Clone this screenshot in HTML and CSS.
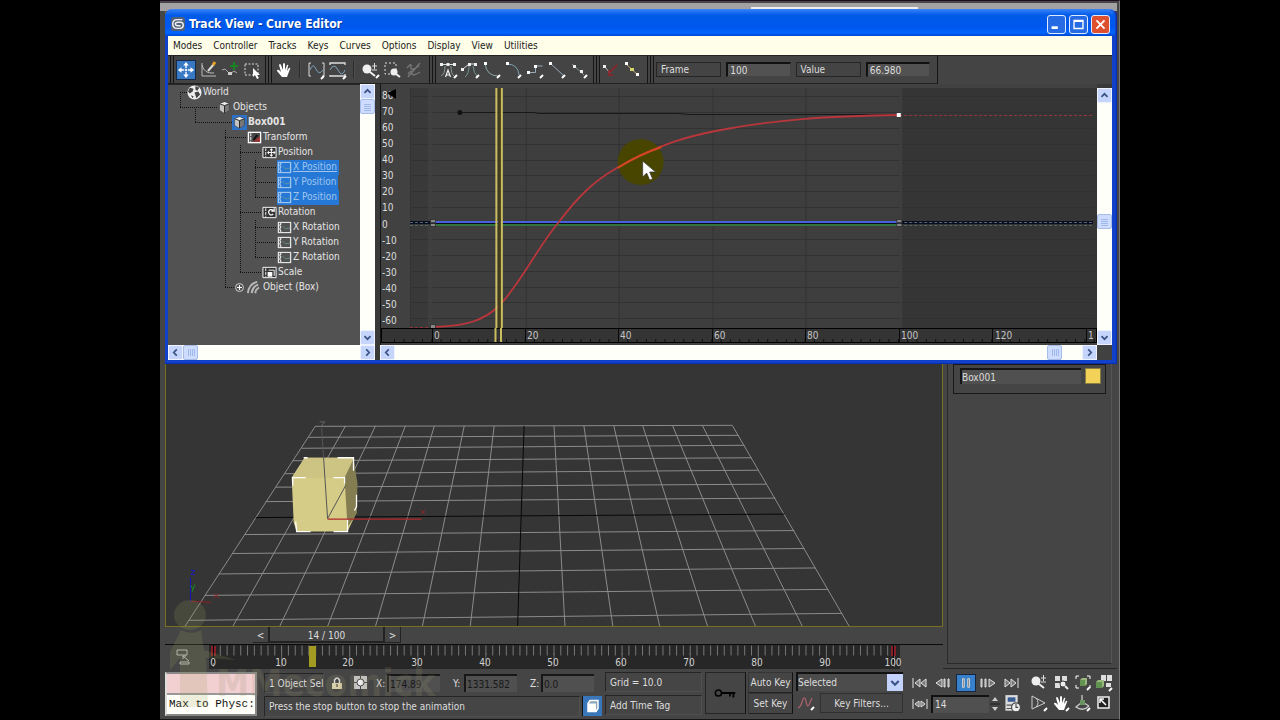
FILE: index.html
```html
<!DOCTYPE html>
<html lang="en">
<head>
<meta charset="utf-8">
<title>Track View - Curve Editor</title>
<link rel="stylesheet" href="styles.css">
</head>
<body>
<svg class="defs" aria-hidden="true">
  <defs>
    <symbol id="curve" viewBox="0 0 16 13"><rect x="1.5" y="1" width="13" height="11" fill="none" stroke="currentColor" stroke-width="1.4"/><path d="M4 1v2l-1 1 1 2-1 2 1 2v2" fill="none" stroke="currentColor" stroke-width="1.300"/><path d="M6 5l3 3 5-1" fill="none" stroke="#6d9a8e" stroke-width=".8"/></symbol>
    <symbol id="cube" viewBox="0 0 16 16"><path d="M8 2l5 2v7l-5 3-5-3V4z" fill="#aaa" stroke="#333"/><path d="M3 4l5 2v8l-5-3z" fill="#c4c4c4"/><path d="M8 6l5-2v7l-5 3z" fill="#777"/><path d="M8 2l5 2-5 2-5-2z" fill="#eee"/><path d="M3 4l5 2 5-2M8 6v8" fill="none" stroke="#222"/></symbol>
    <symbol id="up" viewBox="0 0 15 15"><path d="M4 9l3.500-3.500L11 9" fill="none" stroke="#3c5386" stroke-width="2"/></symbol>
    <symbol id="down" viewBox="0 0 15 15"><path d="M4 6l3.500 3.500L11 6" fill="none" stroke="#3c5386" stroke-width="2"/></symbol>
    <symbol id="left" viewBox="0 0 15 15"><path d="M9 4L5.500 7.500 9 11" fill="none" stroke="#3c5386" stroke-width="2"/></symbol>
    <symbol id="right" viewBox="0 0 15 15"><path d="M6 4l3.500 3.500L6 11" fill="none" stroke="#3c5386" stroke-width="2"/></symbol>
    <symbol id="hand" viewBox="0 0 20 20"><path d="M8 17L3 11q0-2 2-1l2 2L5 5q1-2 2 0l2 5V4q1-2 2 0v6l2-5q2-1 1 1l-1 5 2-3q2-1 1 1l-3 8z" fill="#fff"/></symbol>
    <symbol id="lens" viewBox="0 0 20 20"><circle cx="7" cy="9" r="4.500" fill="#eee"/><path d="M10 12l5 4" stroke="#eee" stroke-width="2"/><path d="M12 6h5M14.500 3v6M12 10h5" stroke="#ddd"/></symbol>
  </defs>
</svg>
<main class="app">
  <div class="topstrip"></div>
  <div class="workspace">
    <section class="left">
      <div class="viewport">
        <svg class="scene" viewBox="165 365 778 262" preserveAspectRatio="xMidYMax meet" aria-label="Perspective viewport">
          <g fill="none" stroke="#8c8c8c">
            <path d="M315 426.500L733 425.500M308 437.500L739 435.500M301 448.500L745 445.500M292 461L752 458M284 474L759 470.500M275 487.500L767 484.500M265 502L776 498.500M244 535L795 531M232 554L805 549M218 574.500L816 568.500M204 596L829 590M188 621L843 614"/>
            <path d="M315 426L184 627M345 426L232 627M375 426L279 627M405 426L327 627M434 426L375 627M464 426L422 627M494 426L470 627M554 426L565 627M584 426L613 627M614 426L660 627M643 426L708 627M673 426L756 627M703 426L803 627M733 426L850 627"/>
            <path d="M524 426L517.500 627M255 518L785 514.500" stroke="#080808"/>
          </g>
          <path d="M291 478l13-20h49l1 10 2 45-9 19h-51l-3-9z" fill="#d5cc88"/>
          <path d="M291 478l13-20h49l-9 20z" fill="#cdc382"/>
          <path d="M344 478l9-19 4 25-1 30-9 14z" fill="#847d51"/>
          <path d="M307 458h-4m34 0h16v13M292 486v-8h13m28 0h11v6m12 11v12l-2 4M295 522l1 10h14m23 0h14v-12" fill="none" stroke="#fff" stroke-width="1.300"/>
          <path d="M321 428L327 519l18-33" fill="none" stroke="#555"/>
          <path d="M327 519.500h94" stroke="#b0292b" stroke-width="1.300"/>
          <path d="M420 510l5 5m0-5l-5 5" stroke="#8c2528"/>
          <path d="M319 422h5l-4 5" fill="none" stroke="#666"/>
          <path d="M189.500 602v-24" stroke="#1414c0"/><path d="M190 602l20 1" stroke="#901c20"/>
          <path d="M190 571h4l-4 4h4" fill="none" stroke="#1a1ac0"/><path d="M190 586l2 4 2-5m-2 5l-1 3" fill="none" stroke="#178a22"/><path d="M213 594l5 5m0-5l-5 5" stroke="#902025"/>
        </svg>
      </div>
      <div class="slider"><button aria-label="Previous frame">&lt;</button><output>14 / 100</output><button aria-label="Next frame">&gt;</button></div>
      <div class="track">
        <svg viewBox="165 645 778 25" preserveAspectRatio="none" role="img" aria-label="Track bar">
          <path d="M209 645H900V670H209z" fill="#272727"/><path d="M165 645.500H943" stroke="#0b0b0b"/>
          <path d="M213 651.500H896" stroke="#777" stroke-width="10" stroke-dasharray="1 5.810"/>
          <path d="M213 661H896" stroke="#666" stroke-width="14" stroke-dasharray="1 67.100"/>
          <path d="M211 647h5v10h-5zM891 647h5v10h-5z" fill="#88202a"/><path d="M213.500 646v18M893.500 646v18" stroke="#080808"/>
          <path d="M309 647h7v21h-7z" fill="#a39a21"/>
          <g fill="none" stroke="#bbb"><path d="M177 651h10v5h-10zM180 663h9v2h-9zM189 662l-6-5m0 3v-3h3"/></g>
          <g class="tracktext"><text x="213" y="667">0</text><text x="281" y="667">10</text><text x="348" y="667">20</text><text x="417" y="667">30</text><text x="485" y="667">40</text><text x="553" y="667">50</text><text x="621" y="667">60</text><text x="689" y="667">70</text><text x="757" y="667">80</text><text x="825" y="667">90</text><text x="893" y="667">100</text></g>
        </svg>
      </div>
    </section>
    <aside class="panel"><div class="panelbody"><div class="namebox"><input aria-label="Object name" value="Box001"><button class="swatch" aria-label="Object color"></button></div></div></aside>
  </div>

  <footer class="status">
    <div class="listener"><div class="macro"></div><div class="output">Max to Physc:</div></div>
    <div class="info">
      <div class="row coords">
        <span class="cell selected">1 Object Sel</span>
        <button aria-label="Selection lock"><svg viewBox="0 0 14 14"><path d="M2.500 7V4q2.500-4 5 0v3" fill="none" stroke="#ddd" stroke-width="1.500"/><path d="M0 7h10v6H0z" fill="#d8cfa8"/><path d="M5 8v3" stroke="#333"/></svg></button>
        <button aria-label="Absolute mode"><svg viewBox="0 0 14 14"><path d="M0 0h13v13H0z" fill="#ccc"/><circle cx="6.500" cy="6.500" r="3.500" fill="#eee" stroke="#444"/><path d="M6.500 0v3m0 7v3M0 6.500h3m7 0h3" stroke="#444"/></svg></button>
        <label>X:<input value="174.89"></label><label>Y:<input value="1331.582"></label><label>Z:<input value="0.0"></label>
      </div>
      <div class="row"><span class="cell prompt">Press the stop button to stop the animation</span><button class="iso" aria-label="Adaptive degradation"><svg viewBox="0 0 19 19"><path d="M5 7l2-3h8v8l-2 3H5z" fill="#8aa5b8" stroke="#fff" stroke-width="1.500"/><path d="M5 7h8v8H5z" fill="#fff"/></svg></button></div>
    </div>
    <div class="gridinfo"><span class="cell">Grid = 10.0</span><span class="cell">Add Time Tag</span></div>
    <button class="key" aria-label="Set keys"><svg viewBox="0 0 26 14"><circle cx="5" cy="7" r="3.500" fill="none" stroke="#000" stroke-width="1.700"/><path d="M8.500 7H24M18 7v4m4-4v5" fill="none" stroke="#000" stroke-width="2"/></svg></button>
    <div class="keying"><button>Auto Key</button><button>Set Key</button></div>
    <div class="filters">
      <div class="selectwrap"><select aria-label="Key mode"><option>Selected</option></select><svg viewBox="0 0 15 15"><use href="#down"/></svg></div>
      <div class="row"><button class="tangent" aria-label="Default tangent"><svg viewBox="0 0 20 18"><path d="M2 14q3-1 5-9 2-3 3 2 1 7 3 4l3-7" fill="none" stroke="#a8606a" stroke-width="1.300"/><path d="M15 16l3-3" stroke="#fff" stroke-width="2"/></svg></button><button class="filterbtn">Key Filters...</button></div>
    </div>
    <div class="transport">
      <div class="row">
        <button aria-label="Go to start"><svg viewBox="0 0 18 14"><path d="M2 2v10M9 3L4 7l5 4zM15 3l-5 4 5 4z" class="ic"/></svg></button>
        <button aria-label="Previous"><svg viewBox="0 0 18 14"><path d="M8 3L2 7l6 4zM10 3h1v8h-1zM14 3h1v8h-1z" class="ic"/></svg></button>
        <button class="on" aria-label="Pause"><svg viewBox="0 0 18 14"><path d="M5 2h2v10H5zM11 2h2v10h-2z" class="ic"/></svg></button>
        <button aria-label="Next"><svg viewBox="0 0 18 14"><path d="M10 3l6 4-6 4zM6 3h1v8H6zM2 3h1v8H2z" class="ic"/></svg></button>
        <button aria-label="Go to end"><svg viewBox="0 0 18 14"><path d="M16 2v10M9 3l5 4-5 4zM3 3l5 4-5 4z" class="ic"/></svg></button>
      </div>
      <div class="row">
        <button aria-label="Key mode toggle"><svg viewBox="0 0 18 14"><path d="M2 2v10M16 2v10M8 4L4 7l4 3zM10 4l4 3-4 3z" class="ic"/></svg></button>
        <input aria-label="Current frame" value="14">
        <svg class="spin" viewBox="0 0 10 18"><path d="M5 2l3 4H2zM5 16l3-4H2z" fill="#ccc"/><path d="M0 9h10" stroke="#222"/></svg>
        <button class="config" aria-label="Time configuration"><svg viewBox="0 0 18 16"><path d="M4 0h11v14H4z" fill="#ddd"/><path d="M6 2h7v4H6z" fill="#385c92"/><path d="M5 9h6m-6 3h5" stroke="#555"/><circle cx="13.500" cy="11" r="4" fill="#eee" stroke="#444"/><path d="M13.500 8v3h2" fill="none" stroke="#444"/></svg></button>
      </div>
    </div>
    <div class="nav">
      <button aria-label="Zoom"><svg viewBox="0 0 20 20"><use href="#lens"/></svg></button>
      <button aria-label="Zoom all"><svg viewBox="0 0 20 20"><path d="M4 4h5v5H4zM11 4h5v5h-5zM4 11h5v5H4z" fill="#ddd"/><circle cx="12" cy="12" r="3" fill="#eee" stroke="#444"/><path d="M14 14l3 3" stroke="#eee" stroke-width="2"/></svg></button>
      <button aria-label="Zoom extents"><svg viewBox="0 0 20 20"><path d="M3 7V4h3m8 0h3v3m0 6v3m-11 0H3v-3" fill="none" stroke="#fff"/><path d="M7 8l2-2h5v6l-2 2H7z" fill="#9ab77f"/><path d="M7 8h5v6H7z" fill="#629350"/><path d="M14 18l3-3" stroke="#fff" stroke-width="2"/></svg></button>
      <button aria-label="Zoom extents all"><svg viewBox="0 0 20 20"><path d="M7 3h5v6H7zM13 3h5v6h-5zM12 11h5v4h-5z" fill="#ddd"/><path d="M2 10l2-2h6v6l-2 2H2z" fill="#9ab77f"/><path d="M2 10h6v6H2z" fill="#629350"/><path d="M15 19l3-3" stroke="#fff" stroke-width="2"/></svg></button>
      <button aria-label="Field of view"><svg viewBox="0 0 20 20"><path d="M3 16V3l13 7L3 16M7 5q4 5 0 9" fill="none" stroke="#ccc"/><path d="M15 18l3-3" stroke="#fff" stroke-width="2"/></svg></button>
      <button aria-label="Pan"><svg viewBox="0 0 20 20"><use href="#hand"/><path d="M15 18l3-3" stroke="#fff" stroke-width="2"/></svg></button>
      <button aria-label="Orbit"><svg viewBox="0 0 20 20"><path d="M9 2v5m7 6l-5-3m5 3q-6 6-13 1l5-4" fill="none" stroke="#ccc" stroke-width="1.300"/><path d="M7 7h5v5H7z" fill="#6a9460"/><path d="M14 18l3-3" stroke="#fff" stroke-width="2"/></svg></button>
      <button aria-label="Maximize viewport"><svg viewBox="0 0 20 20"><path d="M4 4h11v11H4z" fill="#222" stroke="#eee" stroke-width="1.500"/><path d="M12 12L6 6m0 4V6h4" fill="none" stroke="#fff" stroke-width="1.500"/></svg></button>
    </div>
  </footer>

  <div class="watermark" aria-hidden="true"><svg viewBox="0 0 76 115"><ellipse cx="24" cy="17" rx="16" ry="15"/><path d="M15 32q12 6 20 0l3 20q16 5 32 10L40 60l2 49H14V60L4 72V54z"/></svg><span>MMecomick</span></div>

  <section class="window" aria-label="Track View - Curve Editor">
    <header class="title">
      <svg class="logo" viewBox="0 0 16 16"><rect width="16" height="16" rx="3" fill="#50607b"/><path d="M13 3H7Q2 3 2 8t5 5h4q3-1 3-4t-3-3H8Q5 6 5 8t3 2h3" fill="none" stroke="#eee" stroke-width="1.700"/></svg>
      <h1>Track View - Curve Editor</h1>
      <div class="winbuttons"><button aria-label="Minimize"><svg viewBox="0 0 19 19"><path d="M4 13h7" stroke="#fff" stroke-width="3"/></svg></button><button aria-label="Maximize"><svg viewBox="0 0 19 19"><path d="M4.500 5h10v9h-10zM4 6h11" fill="none" stroke="#fff" stroke-width="1.500"/></svg></button><button class="close" aria-label="Close"><svg viewBox="0 0 19 19"><path d="M5 5l9 9m0-9l-9 9" stroke="#fff" stroke-width="2"/></svg></button></div>
    </header>
    <nav class="menu"><button>Modes</button><button>Controller</button><button>Tracks</button><button>Keys</button><button>Curves</button><button>Options</button><button>Display</button><button>View</button><button>Utilities</button></nav>
    <div class="toolbar">
      <div class="group">
        <button class="on" aria-label="Move keys"><svg viewBox="0 0 20 20"><path d="M10 3v14M3 10h14" stroke="#fff" stroke-width="1.500" stroke-dasharray="5 1 2 1"/><path d="M10 1l3 4H7zM10 19l3-4H7zM1 10l4-3v6zM19 10l-4-3v6z" fill="#fff"/></svg></button>
        <button aria-label="Draw curves"><svg viewBox="0 0 20 20"><path d="M4 3v13h14M4 5q2 9 12 8" fill="none" stroke="#bbb"/><path d="M10 11l6-7" stroke="#ddd" stroke-width="2"/><path d="M15 5l2-3" stroke="#e6a021" stroke-width="3"/></svg></button>
        <button aria-label="Add keys"><svg viewBox="0 0 20 20"><path d="M2 10l3-1 5 5 4-3 3 2" fill="none" stroke="#aaa"/><path d="M8 12h4v3H8z" fill="#ccc"/><path d="M14 2v8m-4-4h8" stroke="#18831f" stroke-width="2"/></svg></button>
        <button aria-label="Region select"><svg viewBox="0 0 20 20"><path d="M3 4h13v11H3z" fill="none" stroke="#ddd" stroke-dasharray="2 1.500"/><path d="M11 8v9l2-2 2 4 2-1-2-3h3z" fill="#fff"/></svg></button>
      </div>
      <div class="group">
        <button aria-label="Pan"><svg viewBox="0 0 20 20"><use href="#hand"/></svg></button><i></i>
        <button aria-label="Zoom horizontal extents"><svg viewBox="0 0 20 20"><path d="M5 3H3v13h2m11-13h2v13h-2" fill="none" stroke="#ddd"/><path d="M4 10q3-8 6-1t7 1" fill="none" stroke="#7da1b8"/><path d="M15 19l3-3" stroke="#fff" stroke-width="2"/></svg></button>
        <button aria-label="Zoom value extents"><svg viewBox="0 0 20 20"><path d="M2 5V3h15v2M2 15v1h15v-2" fill="none" stroke="#ddd" stroke-width="1.300"/><path d="M2 10q4-8 8 0t7 0" fill="none" stroke="#7da1b8"/><path d="M15 19l3-3" stroke="#fff" stroke-width="2"/></svg></button><i></i>
        <button aria-label="Zoom"><svg viewBox="0 0 20 20"><use href="#lens"/><path d="M16 18l3-3" stroke="#fff" stroke-width="2"/></svg></button>
        <button aria-label="Zoom region"><svg viewBox="0 0 20 20"><path d="M3 3h11v11H3z" fill="none" stroke="#ddd" stroke-dasharray="2 2"/><circle cx="12" cy="12" r="3.500" fill="#eee"/><path d="M14 14l4 3" stroke="#eee" stroke-width="2"/></svg></button>
        <button aria-label="Isolate curve"><svg viewBox="0 0 20 20"><path d="M3 8q5-6 4-1t8-1M4 14q4-5 4-1t8-1M4 17L16 3" fill="none" stroke="#777" stroke-width="1.300"/></svg></button>
      </div>
      <div class="group">
        <button aria-label="Auto tangents"><svg viewBox="0 0 20 20"><path d="M3 4.500h14" stroke="#ddd"/><path d="M3 16q4-2 4-10m6 0q0 8 3 10" fill="none" stroke="#8a9999"/><path d="M2 3h3v3H2zM8.500 3h3v3h-3zM15 3h3v3h-3z" fill="#eee"/><path d="M7.500 17l2.500-7 2.500 7m-4-2h3" fill="none" stroke="#eee" stroke-width="1.200"/><path d="M16 18l3-3" stroke="#fff" stroke-width="2"/></svg></button>
        <button aria-label="Custom tangents"><svg viewBox="0 0 20 20"><path d="M3 9l6-5h7" fill="none" stroke="#ddd"/><path d="M5 17q4-3 4-11m4 0q1 8 4 10" fill="none" stroke="#789494"/><path d="M1 8h3v3H1zM8 3h3v3H8zM14 3h3v3h-3z" fill="#eee"/><path d="M16 18l3-3" stroke="#fff" stroke-width="2"/></svg></button>
        <button aria-label="Fast tangents"><svg viewBox="0 0 20 20"><path d="M3 4q2 12 13 12" fill="none" stroke="#89a7a6"/><path d="M2 2h3v3H2z" fill="#fff"/><path d="M15 18l3-3" stroke="#fff" stroke-width="2"/></svg></button>
        <button aria-label="Slow tangents"><svg viewBox="0 0 20 20"><path d="M3 4q11 0 12 11" fill="none" stroke="#799faa"/><path d="M2 2h3v3H2z" fill="#fff"/><path d="M14 18l3-3" stroke="#fff" stroke-width="2"/></svg></button>
        <button aria-label="Step tangents"><svg viewBox="0 0 20 20"><path d="M3 12.500h6.500V6h7" fill="none" stroke="#9ab"/><path d="M1 11h3v3H1zM8 5h3v3H8z" fill="#fff"/><path d="M14 18l3-3" stroke="#fff" stroke-width="2"/></svg></button>
        <button aria-label="Linear tangents"><svg viewBox="0 0 20 20"><path d="M2 3l14 13" stroke="#9ab"/><path d="M1 2h3v3H1z" fill="#fff"/><path d="M14 18l3-3" stroke="#fff" stroke-width="2"/></svg></button>
        <button aria-label="Smooth tangents"><svg viewBox="0 0 20 20"><path d="M2 4l12 11" stroke="#899"/><path d="M3 5h3v3H3zM10 10h3v3h-3z" fill="#eee"/><path d="M14 18l3-3" stroke="#fff" stroke-width="2"/></svg></button>
      </div>
      <div class="group tight">
        <button aria-label="Lock tangents"><svg viewBox="0 0 20 20"><path d="M4 7l5 6" stroke="#bbb"/><path d="M2 5h3v3H2z" fill="#eee"/><path d="M9 12l7-7M8 10v5h4" fill="none" stroke="#961f25" stroke-width="1.500"/></svg></button>
        <button aria-label="Show tangents"><svg viewBox="0 0 20 20"><path d="M3 4l13 12" stroke="#ca7"/><path d="M2 2h3v3H2zM13 13h3v3h-3z" fill="#fff"/><path d="M7 8h4v3H7z" fill="#d4d66a"/></svg></button>
      </div>
      <div class="group fields"><label for="frame">Frame</label><input id="frame" value="100"><label for="value">Value</label><input id="value" value="66.980"></div>
    </div>
    <div class="editor">
      <div class="treepane">
        <div class="tree">
          <svg class="links" viewBox="168 84 192 261" aria-hidden="true"><path d="M180.500 91v16M180 91.500h7M180 106.500h37M195.500 108v14M195 121.500h37M225.500 129v158M225 136.500h22M225 286.500h12M240.500 144v128M240 151.500h22M240 211.500h22M240 271.500h22M255.500 159v38M255 166.500h22M255 181.500h22M255 196.500h22M255.500 219v38M255 226.500h22M255 241.500h22M255 256.500h22" fill="none" stroke="#111" stroke-dasharray="1 1"/></svg>
          <ul>
            <li class="d0"><svg viewBox="0 0 16 16"><circle cx="8" cy="8" r="7.500" fill="#eee"/><path d="M3 3l4 1-1 3-3 2-2-2zM9 1l4 2-2 3-2-1zM8 8l4-1 2 3-4 4-1-3zM4 11l3 1-1 2z" fill="#444"/></svg><span>World</span></li>
            <li class="d2"><svg viewBox="0 0 16 16"><use href="#cube"/></svg><span>Objects</span></li>
            <li class="d3 bold"><svg viewBox="0 0 16 16"><path d="M0 0h16v16H0z" fill="#2e72c8"/><use href="#cube"/></svg><span>Box001</span></li>
            <li class="d4"><svg viewBox="0 0 16 13"><path d="M6 2h8v9H6z" fill="#444"/><path d="M6 11l8-6v6z" fill="#9c3535"/><rect x="1.500" y="1" width="13" height="11" fill="none" stroke="#fff" stroke-width="1.400"/><path d="M4 2v9" stroke="#fff" stroke-dasharray="3 1"/><path d="M7 9l4-5" stroke="#111" stroke-width="2"/></svg><span>Transform</span></li>
            <li class="d5"><svg viewBox="0 0 16 13"><path d="M1 1h14v11H1z" fill="#333" stroke="#fff"/><path d="M4 2v9" stroke="#fff" stroke-dasharray="3 1"/><path d="M10 2.500v8M6 6.500h8" stroke="#fff"/><path d="M10 2l2 2H8zM10 11l2-2H8zM5.500 6.500l2-2v4zM14.500 6.500l-2-2v4z" fill="#fff"/></svg><span>Position</span></li>
            <li class="d6 sel"><svg viewBox="0 0 16 13"><use href="#curve"/></svg><span><u>X Position</u></span></li>
            <li class="d6 sel"><svg viewBox="0 0 16 13"><use href="#curve"/></svg><span>Y Position</span></li>
            <li class="d6 sel"><svg viewBox="0 0 16 13"><use href="#curve"/></svg><span>Z Position</span></li>
            <li class="d5"><svg viewBox="0 0 16 13"><path d="M1 1h14v11H1z" fill="#333" stroke="#fff"/><path d="M4 2v9" stroke="#fff" stroke-dasharray="3 1"/><path d="M12 4q-4-2-5 2 1 5 5 2M13 2v3h-3" fill="none" stroke="#fff" stroke-width="1.300"/></svg><span>Rotation</span></li>
            <li class="d6"><svg viewBox="0 0 16 13"><use href="#curve"/></svg><span>X Rotation</span></li>
            <li class="d6"><svg viewBox="0 0 16 13"><use href="#curve"/></svg><span>Y Rotation</span></li>
            <li class="d6"><svg viewBox="0 0 16 13"><use href="#curve"/></svg><span>Z Rotation</span></li>
            <li class="d5"><svg viewBox="0 0 16 13"><path d="M1 1h14v11H1z" fill="#333" stroke="#fff"/><path d="M4 2v9" stroke="#fff" stroke-dasharray="3 1"/><path d="M7 4h6v6" fill="none" stroke="#fff"/><path d="M6 6h5v5H6z" fill="#fff"/></svg><span>Scale</span></li>
            <li class="object"><svg class="plus" viewBox="0 0 11 11"><circle cx="5.500" cy="5.500" r="4" fill="#555" stroke="#ccc"/><path d="M3 5.500h5M5.500 3v5" stroke="#fff"/></svg><svg viewBox="0 0 16 16"><path d="M2 14Q3 4 12 2M6 14q1-7 7-9M10 14q0-4 4-6" fill="none" stroke="#bbb" stroke-width="2"/></svg><span>Object (Box)</span></li>
          </ul>
        </div>
        <div class="vscroll"><button aria-label="Scroll up"><svg viewBox="0 0 15 15"><use href="#up"/></svg></button><span class="thumb"></span><button class="end" aria-label="Scroll down"><svg viewBox="0 0 15 15"><use href="#down"/></svg></button></div>
        <div class="hscroll"><button aria-label="Scroll left"><svg viewBox="0 0 15 15"><use href="#left"/></svg></button><span class="thumb"></span><button class="end" aria-label="Scroll right"><svg viewBox="0 0 15 15"><use href="#right"/></svg></button></div>
      </div>
      <div class="graphpane">
        <div class="graph">
          <div class="axis"><span>80</span><span>70</span><span>60</span><span>50</span><span>40</span><span>30</span><span>20</span><span>10</span><span>0</span><span>-10</span><span>-20</span><span>-30</span><span>-40</span><span>-50</span><span>-60</span><svg class="marker" viewBox="0 0 9 10"><path d="M0 4l9-4v10z"/></svg></div>
          <svg class="plot" viewBox="409 88 688 240" preserveAspectRatio="none" role="img" aria-label="Position curves">
            <path d="M409 88h688v240H409z" fill="#353535"/><path d="M432 88h467v240H432z" fill="#3e3e3e"/><path d="M409 88h23v240h-23z" fill="#393939"/>
            <path d="M409 96.500H1094M409 112.500H1094M409 128.500H1094M409 144.500H1094M409 160.500H1094M409 175.500H1094M409 191.500H1094M409 207.500H1094M409 239.500H1094M409 255.500H1094M409 271.500H1094M409 287.500H1094M409 302.500H1094M409 318.500H1094" stroke="#303030" opacity=".8"/>
            <path d="M409.500 88v240M525.500 88v240M618.500 88v240M712.500 88v240M805.500 88v240" stroke="#333"/>
            <path d="M427 88h5v240h-5zM899 88h3v240h-3z" fill="#454545" opacity=".6"/>
            <circle cx="640" cy="162" r="23" fill="#474500"/>
            <path d="M459 112.500h74l5 1h140l10 1h211" fill="none" stroke="#181818"/><circle cx="459" cy="112.500" r="2.500" fill="#111"/>
            <path d="M409 222.500H1093" stroke="#080d1c" stroke-width="3"/><path d="M409 222.500H1093" stroke="#586282" stroke-dasharray="3 2"/><path d="M409 225.500H1093" stroke="#53695c" stroke-dasharray="3 2"/>
            <path d="M432 222H899" stroke="#4a5fdc" stroke-width="2"/><path d="M432 225H899" stroke="#32743c" stroke-width="2"/>
            <path d="M409 327.500h23M899 115.500H1094" stroke="#94343b" stroke-dasharray="3 2"/>
            <path d="M432 327C463 326 482 322 499 305C522 280 535 250 558 222C578 196 592 182 616 168C660 143 689 136 720 130C774 120 825 116 899 115" fill="none" stroke="#b8363c" stroke-width="1.800"/>
            <path d="M617 168q20-13 44-21" fill="none" stroke="#d24722" stroke-width="2"/>
            <path d="M497 88h3v240h-3z" fill="#423b1b"/><path d="M495.500 88v240M501 88v240" stroke="#c9bd60" stroke-width="2"/>
            <path d="M429.500 219.500h5v3h-5zM429.500 223.500h5v3h-5zM429.500 324.500h5v4h-5zM896.500 219.500h5v3h-5zM896.500 223.500h5v3h-5z" fill="#888" stroke="#222" stroke-width=".7"/><path d="M896.500 113h4v4h-4z" fill="#fff"/>
            <path d="M642 161v16l4-4 3 7 3-1-3-7h6z" fill="#fff" stroke="#333" stroke-width=".7"/>
          </svg>
          <svg class="ruler" viewBox="381 329 716 15" preserveAspectRatio="none" role="img" aria-label="Frame ruler"><path d="M381 329h716v15H381z" fill="#343434" stroke="#000" stroke-width="2"/><path d="M394 341.500H1095" stroke="#111" stroke-width="3" stroke-dasharray="1 8.330"/><path d="M432.500 330v13M525.500 330v13M618.500 330v13M712.500 330v13M805.500 330v13M899.500 330v13M992.500 330v13M1086.500 330v13" stroke="#090909"/><g class="rulertext"><text x="434" y="340">0</text><text x="527" y="340">20</text><text x="620" y="340">40</text><text x="714" y="340">60</text><text x="807" y="340">80</text><text x="901" y="340">100</text><text x="995" y="340">120</text><text x="1088" y="340">1</text></g><path d="M495.500 329v14M501 329v14" stroke="#c9bd60" stroke-width="2"/></svg>
        </div>
        <div class="vscroll graphv"><button aria-label="Scroll up"><svg viewBox="0 0 15 15"><use href="#up"/></svg></button><span class="thumb"></span><button class="end" aria-label="Scroll down"><svg viewBox="0 0 15 15"><use href="#down"/></svg></button></div>
        <div class="hscroll"><button aria-label="Scroll left"><svg viewBox="0 0 15 15"><use href="#left"/></svg></button><span class="thumb late"></span><button class="end2" aria-label="Scroll right"><svg viewBox="0 0 15 15"><use href="#right"/></svg></button></div>
      </div>
    </div>
  </section>
</main>
</body>
</html>
```
FILE: styles.css
```css
* { box-sizing: border-box; }
body {
  margin: 0;
  background: #000;
  color: #ddd;
  font: 10px/15px "DejaVu Sans Condensed", Tahoma, "DejaVu Sans", sans-serif;
}
button, input, select { font: inherit; color: inherit; margin: 0; padding: 0; border: 0; border-radius: 0; background: none; min-width: 0; }
button svg { display: block; width: 100%; height: 100%; }
.defs { position: absolute; width: 0; height: 0; }
.row { display: flex; align-items: center; }

.app {
  position: relative;
  display: flex;
  flex-direction: column;
  width: 75%;
  min-width: 960px;
  min-height: 100vh;
  margin: 0 auto;
  padding: 2px 2px 3px 5px;
  background: #454545;
  border-top: 1px solid #1c0b1c;
  border-right: 1px solid #777;
  border-bottom: 1px solid #17151a;
}
.topstrip { height: 8px; margin-left: -5px; background: linear-gradient(90deg, transparent 591px, #eee 591px, #eee 758px, transparent 758px) 0 4px / 100% 2px no-repeat, #a3a1a3; }
.workspace { display: flex; flex: 1; }
.left { display: flex; flex: 1; flex-direction: column; min-width: 0; }
.viewport { display: flex; flex: 1; align-items: flex-end; padding-top: 353px; background: #353535; border: 1px solid #77701e; border-top: 0; }
.scene { display: block; width: 100%; }

.slider { display: flex; height: 17px; padding-left: 88px; }
.slider > * { height: 16px; text-align: center; line-height: 17px; border: 1px solid #222; border-width: 0 1px 1px 0; }
.slider button { width: 16px; }
.slider output { width: 116px; border-width: 0 2px 2px 1px; }
.track { height: 25px; }
.track svg { display: block; width: 100%; height: 100%; }
.tracktext { font-size: 10px; fill: #d0d0d0; text-anchor: middle; }

.panel { width: 174px; padding: 0 5px 4px 4px; border-bottom: 1px solid #252525; }
.panelbody { height: 100%; padding: 352px 5px 0; border: 1px solid #2a2a2a; border-right-color: #555; }
.namebox { display: flex; gap: 4px; height: 30px; padding: 3px 4px 9px 6px; border: 1px solid #191919; }
.namebox input { flex: 1; background: #505050; border: solid #151515; border-width: 2px 0 0 2px; }
.swatch { width: 16px; background: #f2d258; border: 1px solid #8a7d42; }

.status { display: flex; height: 47px; padding-top: 3px; }
.listener { width: 92px; color: #111; border: 2px solid #888; border-left-color: #ddd; font: 11px/18px "Liberation Mono", monospace; }
.macro { height: 21px; background: #f2cfd1; border-bottom: 2px solid #999; }
.output { height: 19px; padding-left: 2px; white-space: nowrap; background: #fffef8; }
.cell { display: block; height: 20px; padding: 2px 4px; white-space: nowrap; border: 1px solid #252525; border-right-color: #505050; border-bottom-color: #505050; }
.info { flex: 1; padding-left: 7px; min-width: 0; }
.info .row { height: 22px; }
.info .row + .row { height: 24px; }
.selected { width: 60px; padding-right: 0; }
.coords { gap: 8px; }
.coords button { flex: none; width: 14px; height: 14px; }
.coords label { display: flex; flex: none; align-items: center; justify-content: space-between; width: 64px; }
.coords label + label { margin-left: 5px; }
.coords input { width: 53px; height: 18px; padding-left: 1px; color: #181818; background: #505050; border: solid #181818; border-width: 2px 0 0 2px; }
.prompt { flex: 1; height: 21px; }
.iso { width: 20px; height: 20px; margin: 0 6px 0 2px; background: #3976ba; border-left: 1px solid #111; }
.gridinfo { width: 97px; margin-left: -3px; display: flex; flex-direction: column; gap: 3px; }
.key { width: 41px; height: 42px; margin-left: 3px; padding: 8px; border: 1px solid #252525; border-right-color: #111; }
.keying { display: grid; width: 45px; height: 42px; margin: 0 3px 0 2px; white-space: nowrap; }
.keying button { border: 1px solid #353535; border-bottom-color: #222; border-right-color: #111; display: flex; align-items: center; justify-content: center; }
.filters { width: 111px; }
.selectwrap { display: grid; grid-template-columns: 1fr 16px; height: 19px; width: 107px; border: 1px solid #111; border-width: 2px 0 0 2px; background: #4c4c4c; }
.selectwrap select { grid-area: 1 / 1 / 2 / 3; width: 100%; appearance: none; color: #ddd; }
.selectwrap svg { grid-area: 1 / 2; width: 16px; height: 17px; background: #c4d3fb; pointer-events: none; }
.filters .row { gap: 4px; margin-top: 2px; }
.tangent { width: 20px; height: 20px; }
.filterbtn { flex: 1; height: 20px; border: 1px solid #303030; margin-right: 4px; }
.transport { width: 114px; padding-left: 3px; }
.transport .row { height: 21px; justify-content: space-between; }
.transport button { flex: none; width: 20px; height: 18px; padding: 2px 1px; }
.transport .on { background: #3980cb; border: 1px solid #142640; }
.transport .config { padding: 0; }
.ic { fill: #777; stroke: #e4e4e4; stroke-width: 1; }
.transport input { width: 58px; height: 18px; padding-left: 2px; background: #505050; border: solid #111; border-width: 2px 0 0 2px; }
.spin { flex: none; width: 10px; height: 18px; }
.nav { display: grid; grid-template-columns: repeat(4, 1fr); gap: 0 1px; width: 86px; height: 42px; margin: 0 2px 0 8px; }
.nav button { width: 20px; height: 20px; }

.watermark { position: absolute; left: 6px; top: 597px; display: flex; align-items: flex-end; height: 115px; opacity: .18; color: #9a9270; font: bold 37px/58px "DejaVu Sans Condensed", sans-serif; pointer-events: none; }
.watermark svg { width: 76px; height: 115px; margin-right: -26px; fill: #9ba35c; }

.window { position: absolute; top: 8px; right: 2px; left: 5px; padding: 0 4px 3px 3px; background: #1140ca; border-radius: 7px 7px 0 0; border: 1px solid #0730b1; border-top-color: #3c82ef; border-left: 0; }
.title { display: flex; align-items: center; height: 26px; margin: 0 -3px; padding: 2px 5px 0 6px; background: linear-gradient(#2e7cf7, #005be8 20%, #0057ef 65%, #0064ff 88%, #0047cc); border-radius: 6px 6px 0 0; color: #fff; }
.logo { width: 14px; height: 14px; }
.title h1 { flex: 1; margin: 0 0 0 4px; font-size: 12px; line-height: 16px; text-shadow: 1px 1px #003b9b; }
.winbuttons { display: flex; gap: 3px; }
.winbuttons button { width: 19px; height: 19px; background: #266be4; border: 1px solid #e1ebff; border-radius: 3px; }
.winbuttons .close { background: #dd5030; }
.menu { display: flex; gap: 11px; height: 19px; padding-left: 5px; background: #fffee8; color: #222; }
.toolbar { display: flex; height: 29px; background: #444; border-top: 1px solid #232323; }
.group { display: flex; align-items: center; gap: 2px; width: 164px; padding-left: 8px; border-right: 1px solid #151515; border-bottom: 1px solid #222; background: linear-gradient(90deg, transparent 2px, #151515 2px, #151515 3px, transparent 3px, transparent 5px, #151515 5px, #151515 6px, transparent 6px); }
.group:first-child { width: 98px; }
.group.tight { width: 54px; padding-left: 7px; }
.group.fields { width: 290px; gap: 5px; padding-right: 7px; }
.group button { flex: none; width: 20px; height: 20px; }
.group .on { background: #3979c4; border: 1px solid #132b49; }
.group i { width: 2px; height: 17px; margin: 0 3px; background: #2b2b2b; border-right: 1px solid #4d4d4d; }
.fields label, .fields input { flex: 1; height: 15px; padding-left: 4px; border: 1px solid #252525; line-height: 13px; }
.fields input { padding-left: 2px; background: #525252; border-color: #111 #444 #444 #111; border-width: 2px 1px 1px 2px; }

.editor { display: flex; background: #393939; }
.treepane, .graphpane { display: grid; grid-template-columns: minmax(0, 1fr) 15px; grid-template-rows: 261px 15px; }
.treepane { width: 207px; background: #525252; }
.graphpane { flex: 1; margin-left: 5px; min-width: 0; }
.tree { position: relative; overflow: hidden; border-top: 1px solid #262626; }
.links { position: absolute; left: 0; top: 0; width: 192px; height: 261px; }
.tree ul { position: relative; margin: 0; padding: 0; list-style: none; color: #e4e4e4; }
.tree li { display: flex; width: max-content; height: 15px; line-height: 14px; white-space: nowrap; }
.tree li svg { flex: none; width: 15px; height: 15px; }
.tree li span { padding: 0 2px 0 1px; }
.d0 { margin-left: 19px; }
.d2 { margin-left: 49px; }
.d3 { margin-left: 64px; }
.d4 { margin-left: 79px; }
.d5 { margin-left: 94px; }
.d6 { margin-left: 109px; }
.bold { font-weight: bold; }
.sel { background: #2678d7; color: #9fc5ed; }
.object { margin-left: 66px; }
.tree .object svg { margin-right: 1px; }
.tree .plus { width: 11px; margin-right: 2px; }

.vscroll, .hscroll { display: flex; background: #fffffa; }
.vscroll { flex-direction: column; }
.vscroll button, .hscroll button { flex: none; width: 15px; height: 15px; border: 1px solid #eef2ff; border-radius: 2px; background: #c5d5fb; }
.hscroll { grid-column: 1 / 3; }
.thumb { flex: none; width: 15px; height: 15px; border: 1px solid #a7bde9; border-radius: 2px; background: repeating-linear-gradient(90deg, transparent 0, transparent 1px, #9eb8ea 1px, #9eb8ea 2px) 3px 3px / 8px 7px no-repeat, #cddcff; }
.vscroll .thumb { background: repeating-linear-gradient(transparent 0, transparent 1px, #9eb8ea 1px, #9eb8ea 2px) 3px 3px / 7px 8px no-repeat, #cddcff; }
.end { margin-top: auto; }
.hscroll .end { margin: 0 0 0 auto; }
.graphv { margin-top: 4px; }
.graphv .thumb { margin-top: 111px; }
.hscroll .late { margin-left: auto; margin-right: 20px; }
.end2 { margin-right: 15px; }
.graphpane .hscroll { background: linear-gradient(#414141, #414141) right / 15px 15px no-repeat, #fffffa; }
.graph { display: grid; grid-template-columns: 29px minmax(0, 1fr); grid-template-rows: 240px 15px; padding-top: 4px; border-left: 1px solid #151515; background: #414141; }
.axis { position: relative; display: flex; flex-direction: column; justify-content: space-between; line-height: 15px; padding-left: 1px; }
.marker { position: absolute; left: 6px; top: 1px; width: 9px; height: 10px; }
.plot, .ruler { display: block; width: 100%; height: 100%; }
.ruler { grid-column: 1 / 3; }
.rulertext { font-size: 10px; fill: #c4c4c4; }
```
